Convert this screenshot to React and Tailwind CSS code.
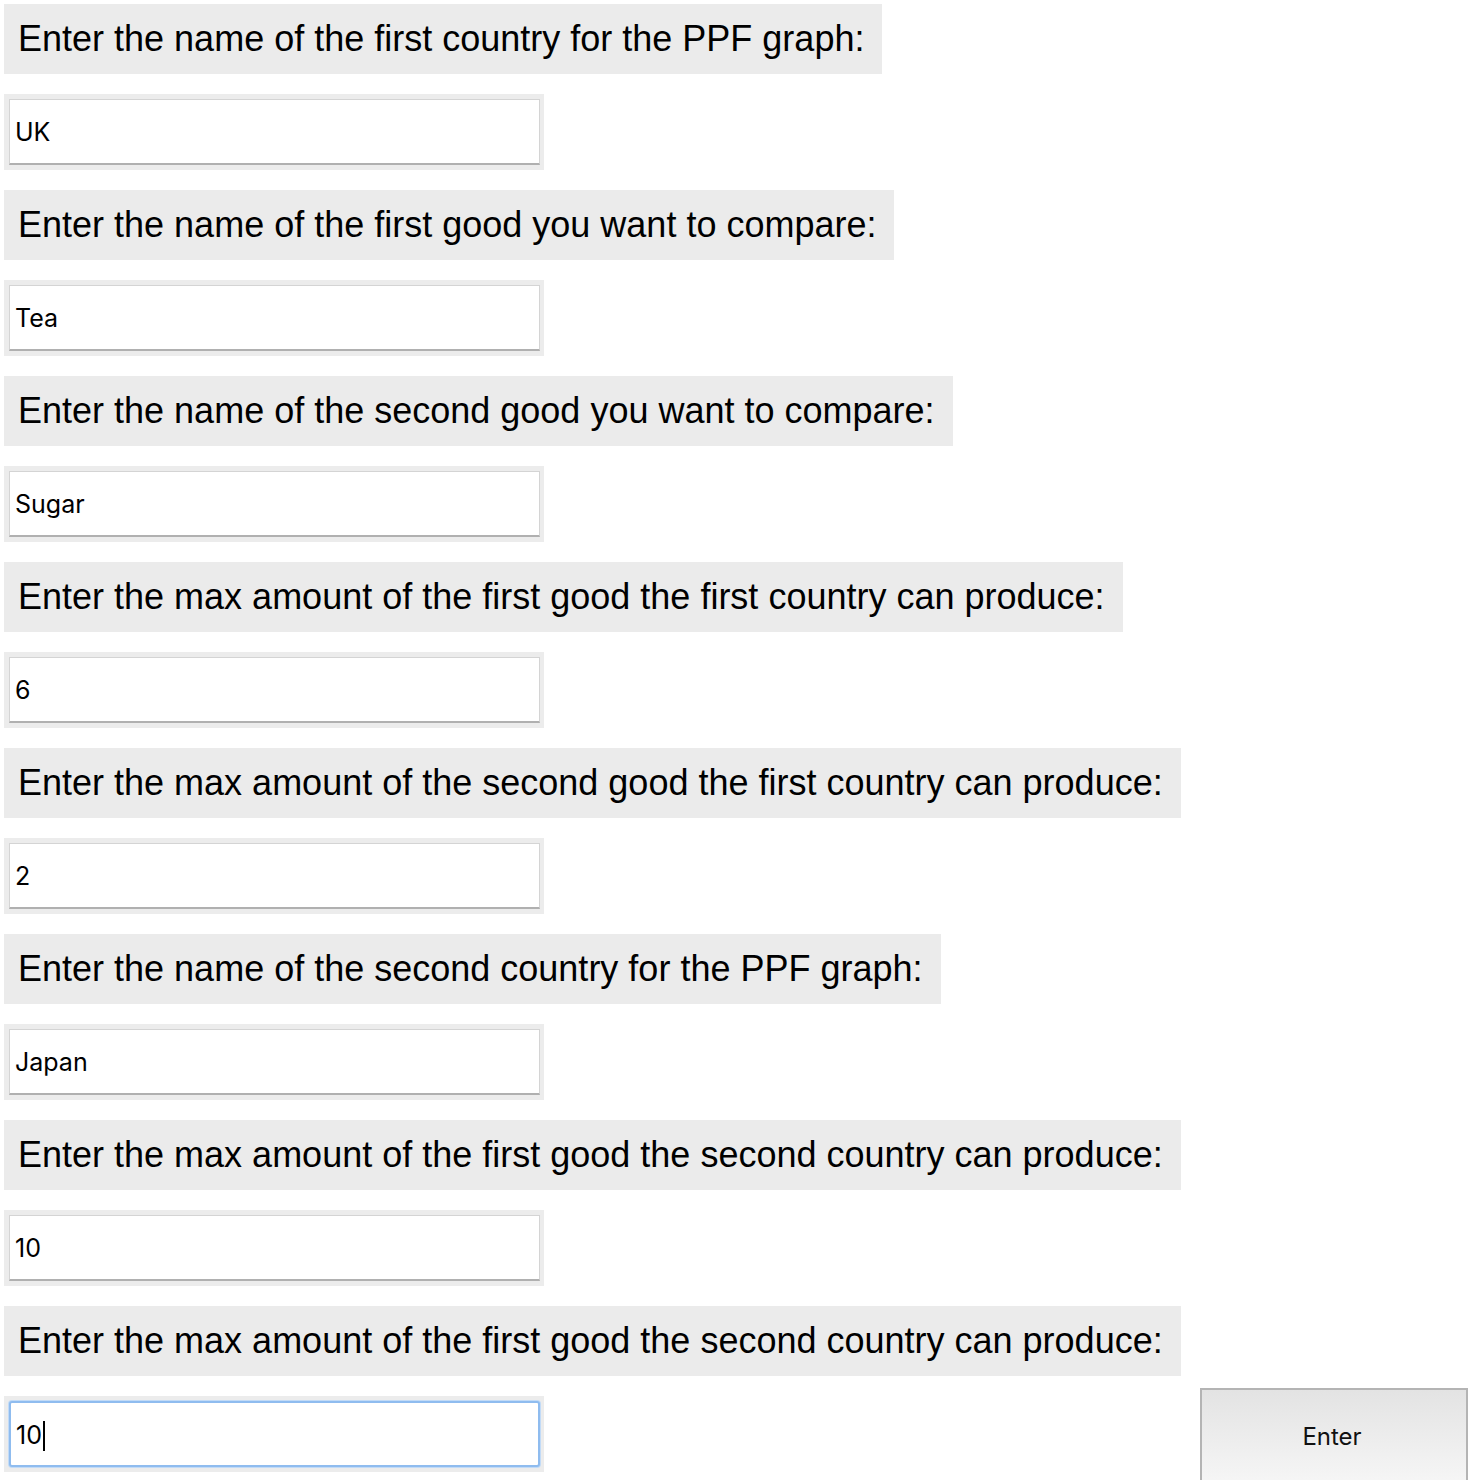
const fields = [
    {label: 'Enter the name of the first country for the PPF graph:', value: 'UK'},
    {label: 'Enter the name of the first good you want to compare:', value: 'Tea'},
    {label: 'Enter the name of the second good you want to compare:', value: 'Sugar'},
    {label: 'Enter the max amount of the first good the first country can produce:', value: '6'},
    {label: 'Enter the max amount of the second good the first country can produce:', value: '2'},
    {label: 'Enter the name of the second country for the PPF graph:', value: 'Japan'},
    {label: 'Enter the max amount of the first good the second country can produce:', value: '10'},
]

const Label = ({text}) => (
    <div className="flex">
        <div className="h-[70px] flex items-center bg-[#ebebeb] pl-[14px] pr-[18px] text-[36px] text-black whitespace-nowrap"
             style={{fontFamily: '"Liberation Sans", Arial, sans-serif'}}>
            {text}
        </div>
    </div>
)

const Field = ({value, focused}) => (
    <div className="w-[540px] h-[76px] bg-[#ececec] pl-[5px] pr-[4px] py-[5px]">
        <div className={focused
            ? 'h-full bg-white border-[2px] border-[#8fbcef] rounded-[3px] flex items-center pl-[5px] pt-[3px] shadow-[0_0_0_1px_#c2dbf7]'
            : 'h-full bg-white border border-[#d4d4d4] border-b-[2px] border-b-[#b0b0b0] flex items-center pl-[5px] pt-[3px]'}>
            <span className="text-[25px] text-black" style={{fontFamily: 'Inter, "Noto Sans", sans-serif'}}>{value}</span>
            {focused && <span className="w-[2px] h-[30px] bg-black ml-[1px]"/>}
        </div>
    </div>
)

const App = () => (
    <div className="bg-white min-h-[1480px] pl-[4px] pt-[4px] overflow-hidden">
        {fields.map((f, i) => (
            <div key={i}>
                <Label text={f.label}/>
                <div className="mt-[20px] mb-[20px]">
                    <Field value={f.value}/>
                </div>
            </div>
        ))}
        <Label text="Enter the max amount of the first good the second country can produce:"/>
        <div className="flex items-start mt-[12px]">
            <div className="mt-[8px]">
                <Field value="10" focused/>
            </div>
            <button className="ml-auto w-[268px] h-[98px] border-2 border-[#b4b4b4] bg-gradient-to-b from-[#e3e3e3] to-[#f6f6f6] text-[24px] text-[#111] pr-[4px]"
                    style={{fontFamily: 'Inter, "Noto Sans", sans-serif'}}>
                Enter
            </button>
        </div>
    </div>
)

export default App
